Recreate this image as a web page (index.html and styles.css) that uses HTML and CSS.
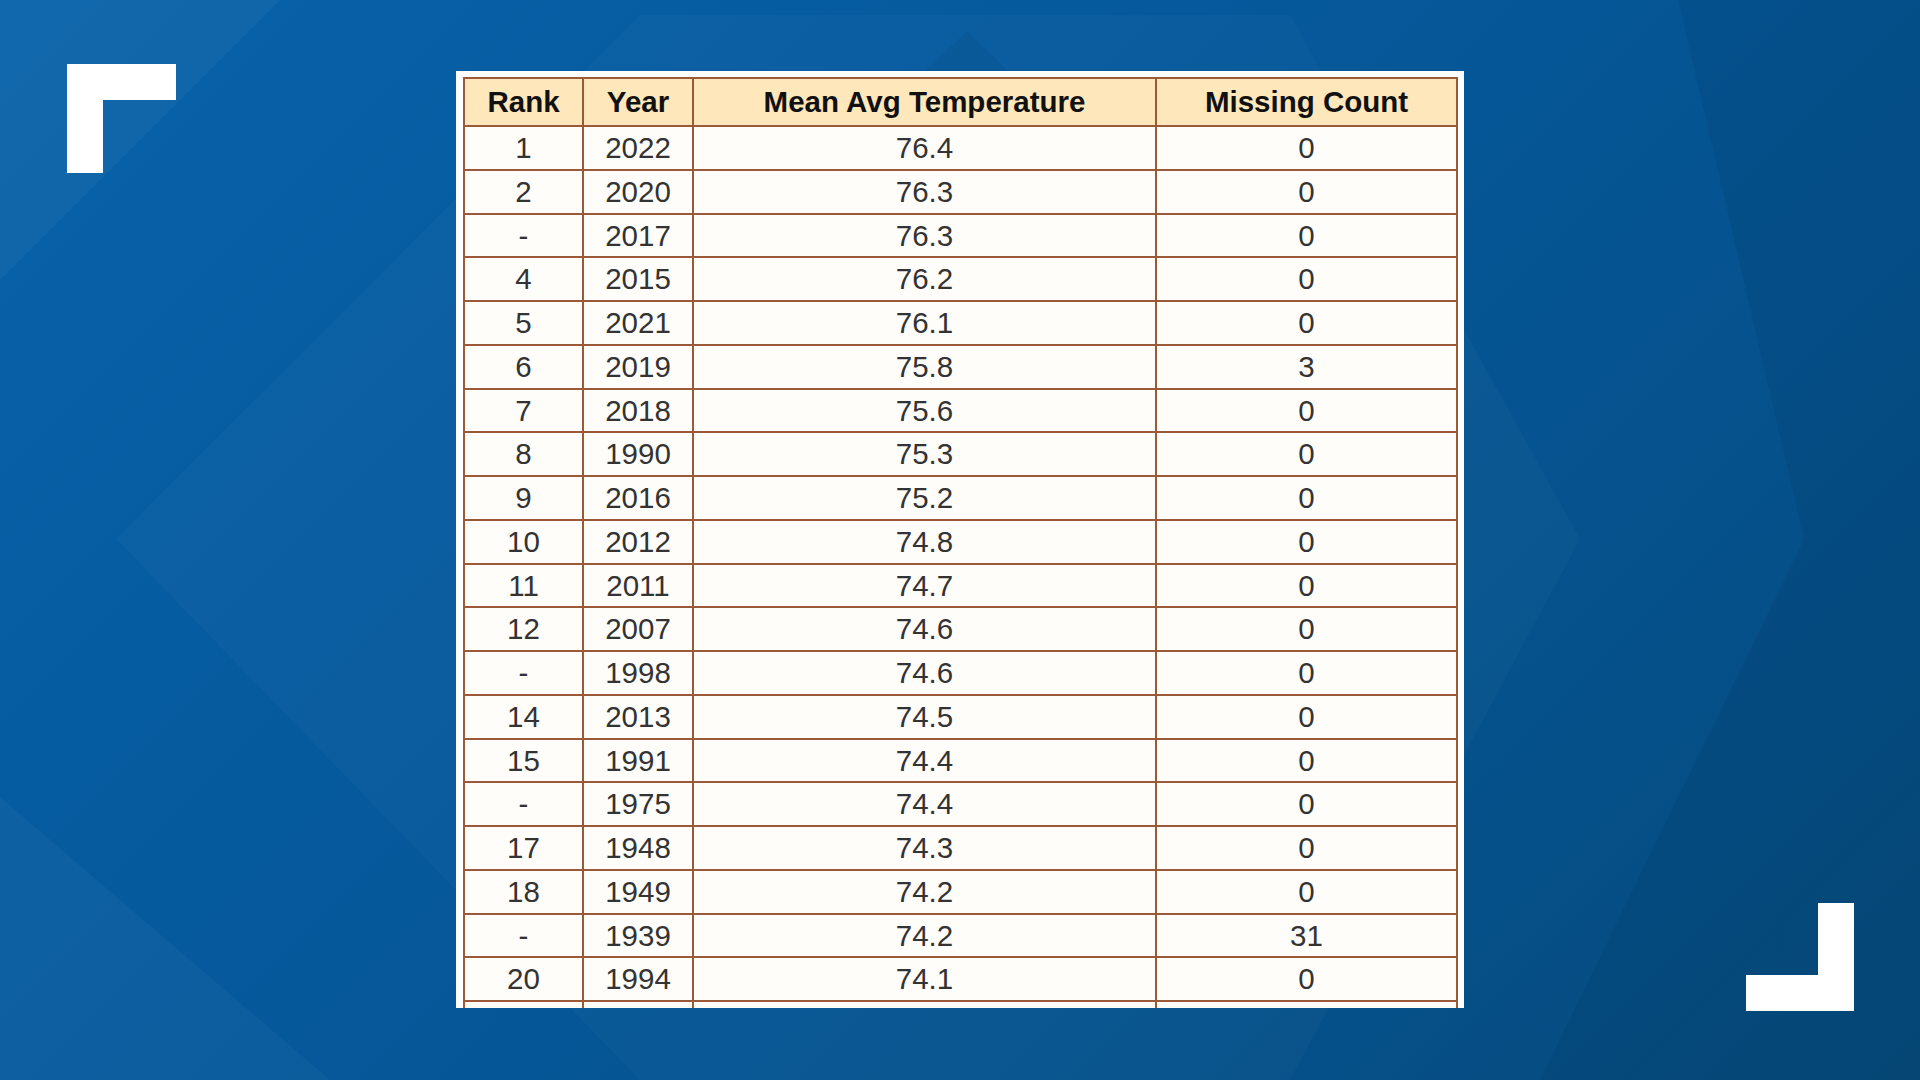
FILE: index.html
```html
<!DOCTYPE html>
<html lang="en">
<head>
<meta charset="utf-8">
<title>Mean Avg Temperature Rankings</title>
<link rel="stylesheet" href="styles.css">
</head>
<body>
<div class="stage">
  <svg class="bg" viewBox="0 0 1920 1080" preserveAspectRatio="none" aria-hidden="true">
    <polygon points="0,0 280,0 0,280" fill="#ffffff" fill-opacity="0.04"/>
    <polygon points="116,539 640,15 1290,15 1580,539 1290,1080 640,1080" fill="#ffffff" fill-opacity="0.025"/>
    <polygon points="1678,0 1920,0 1920,1080 1540,1080 1804,539" fill="#000000" fill-opacity="0.05"/>
    <polygon points="0,797 330,1080 0,1080" fill="#ffffff" fill-opacity="0.03"/>
    <polygon points="967,31 1100,160 830,160" fill="#000000" fill-opacity="0.04"/>
  </svg>
  <div class="corner corner-tl"></div>
  <div class="corner corner-br"></div>
  <div class="panel">
    <table class="records">
      <colgroup>
        <col class="c-rank"><col class="c-year"><col class="c-mean"><col class="c-miss">
      </colgroup>
      <thead>
        <tr><th>Rank</th><th>Year</th><th>Mean Avg Temperature</th><th>Missing Count</th></tr>
      </thead>
      <tbody>
        <tr><td>1</td><td>2022</td><td>76.4</td><td>0</td></tr>
        <tr><td>2</td><td>2020</td><td>76.3</td><td>0</td></tr>
        <tr><td>-</td><td>2017</td><td>76.3</td><td>0</td></tr>
        <tr><td>4</td><td>2015</td><td>76.2</td><td>0</td></tr>
        <tr><td>5</td><td>2021</td><td>76.1</td><td>0</td></tr>
        <tr><td>6</td><td>2019</td><td>75.8</td><td>3</td></tr>
        <tr><td>7</td><td>2018</td><td>75.6</td><td>0</td></tr>
        <tr><td>8</td><td>1990</td><td>75.3</td><td>0</td></tr>
        <tr><td>9</td><td>2016</td><td>75.2</td><td>0</td></tr>
        <tr><td>10</td><td>2012</td><td>74.8</td><td>0</td></tr>
        <tr><td>11</td><td>2011</td><td>74.7</td><td>0</td></tr>
        <tr><td>12</td><td>2007</td><td>74.6</td><td>0</td></tr>
        <tr><td>-</td><td>1998</td><td>74.6</td><td>0</td></tr>
        <tr><td>14</td><td>2013</td><td>74.5</td><td>0</td></tr>
        <tr><td>15</td><td>1991</td><td>74.4</td><td>0</td></tr>
        <tr><td>-</td><td>1975</td><td>74.4</td><td>0</td></tr>
        <tr><td>17</td><td>1948</td><td>74.3</td><td>0</td></tr>
        <tr><td>18</td><td>1949</td><td>74.2</td><td>0</td></tr>
        <tr><td>-</td><td>1939</td><td>74.2</td><td>31</td></tr>
        <tr><td>20</td><td>1994</td><td>74.1</td><td>0</td></tr>
        <tr><td></td><td></td><td></td><td></td></tr>
      </tbody>
    </table>
  </div>
</div>
</body>
</html>
```

FILE: styles.css
```css
html, body {
  margin: 0;
  padding: 0;
  width: 1920px;
  height: 1080px;
  overflow: hidden;
}

.stage {
  position: relative;
  width: 1920px;
  height: 1080px;
  box-sizing: border-box;
  padding-top: 71px;
  display: flex;
  justify-content: center;
  align-items: flex-start;
  background: linear-gradient(135deg, #0962a9 0%, #05599c 40%, #05528e 70%, #064a7b 100%);
  font-family: "Liberation Sans", Arial, sans-serif;
}

.bg {
  position: absolute;
  left: 0;
  top: 0;
  width: 1920px;
  height: 1080px;
  z-index: 0;
}

.corner {
  position: absolute;
  z-index: 2;
  box-sizing: border-box;
  border-color: #ffffff;
  border-style: solid;
  border-width: 0;
}

.corner-tl {
  left: 67px;
  top: 64px;
  width: 109px;
  height: 109px;
  border-left-width: 36px;
  border-top-width: 36px;
}

.corner-br {
  left: 1746px;
  top: 903px;
  width: 108px;
  height: 108px;
  border-right-width: 36px;
  border-bottom-width: 36px;
}

.panel {
  position: relative;
  z-index: 1;
  width: 1008px;
  height: 937px;
  box-sizing: border-box;
  padding: 6px 8px 0 7px;
  background: #ffffff;
  overflow: hidden;
}

.records {
  width: 993px;
  table-layout: fixed;
  border-collapse: collapse;
  border: 2px solid #9b5a37;
  font-size: 29.5px;
}

.c-rank { width: 119px; }
.c-year { width: 110px; }
.c-mean { width: 463px; }
.c-miss { width: 301px; }

.records th,
.records td {
  border: 2px solid #9b5a37;
  padding: 0;
  text-align: center;
  vertical-align: middle;
  line-height: 1;
}

.records thead tr {
  height: 48px;
}

.records th {
  background: #fde7bb;
  color: #111111;
  font-weight: bold;
}

.records tbody tr {
  height: 43.75px;
}

.records td {
  background: #fffdfa;
  color: #333333;
  font-weight: normal;
}
```
